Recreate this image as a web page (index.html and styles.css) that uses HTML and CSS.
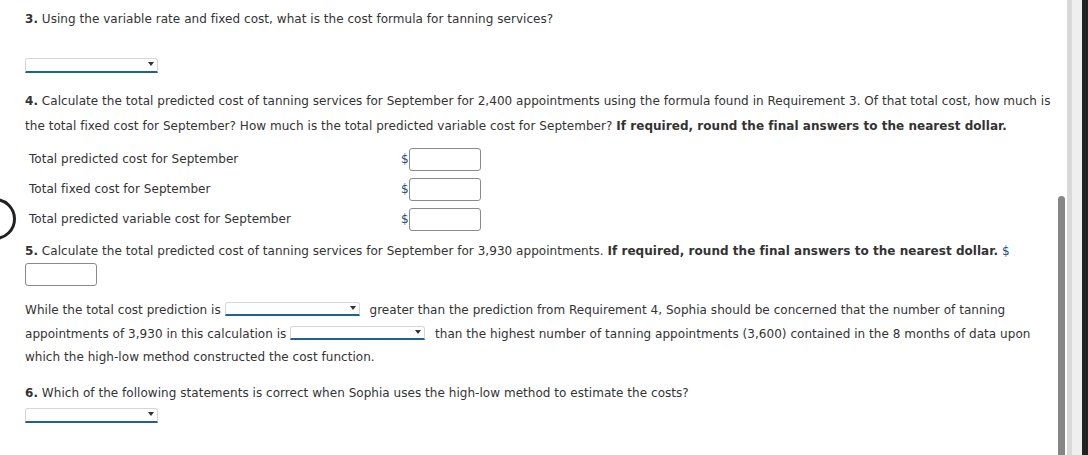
FILE: index.html
```html
<!DOCTYPE html>
<html lang="en">
<head>
  <meta charset="UTF-8">
  <title>Requirements 3-6</title>
  <link rel="stylesheet" href="styles.css">
</head>
<body>
  <div class="page">
    <div class="content">
      <p class="question"><b>3.</b> Using the variable rate and fixed cost, what is the cost formula for tanning services?</p>
      <div class="dropdown q3-select"></div>

      <p class="question q4"><b>4.</b> Calculate the total predicted cost of tanning services for September for 2,400 appointments using the formula found in Requirement 3. Of that total cost, how much is the total fixed cost for September? How much is the total predicted variable cost for September? <b>If required, round the final answers to the nearest dollar.</b></p>

      <div class="answer-rows">
        <div class="answer-row">
          <span class="answer-label">Total predicted cost for September</span>
          <span class="dollar">$</span>
          <span class="field"></span>
        </div>
        <div class="answer-row">
          <span class="answer-label">Total fixed cost for September</span>
          <span class="dollar">$</span>
          <span class="field"></span>
        </div>
        <div class="answer-row">
          <span class="answer-label">Total predicted variable cost for September</span>
          <span class="dollar">$</span>
          <span class="field"></span>
        </div>
      </div>

      <p class="question q5"><b>5.</b> Calculate the total predicted cost of tanning services for September for 3,930 appointments. <b>If required, round the final answers to the nearest dollar.</b> <span class="dollar">$</span></p>
      <div class="field q5-field"></div>

      <p class="sentence">While the total cost prediction is <span class="dropdown inline"></span> greater than the prediction from Requirement 4, Sophia should be concerned that the number of tanning appointments of 3,930 in this calculation is <span class="dropdown inline"></span> than the highest number of tanning appointments (3,600) contained in the 8 months of data upon which the high-low method constructed the cost function.</p>

      <p class="question q6"><b>6.</b> Which of the following statements is correct when Sophia uses the high-low method to estimate the costs?</p>
      <div class="dropdown q6-select"></div>
    </div>

    <div class="scroll-track"><div class="scroll-thumb"></div></div>
    <div class="side-edge"></div>
    <div class="side-panel"></div>
    <div class="side-dark"></div>
  </div>

  <!-- cursor ring peeking in from the left edge -->
  <div class="ring"></div>
</body>
</html>
```

FILE: styles.css
```css
* {
  margin: 0;
  padding: 0;
  box-sizing: border-box;
}

body {
  font-family: "DejaVu Sans", Verdana, sans-serif;
  font-size: 12px;
  letter-spacing: 0.04px;
  color: #333;
  background: #fff;
  overflow: hidden;
}

.page {
  display: flex;
  height: 455px;
}

.content {
  flex: 1;
  padding: 7px 2px 0 25px;
}

.question {
  line-height: 25px;
}

.question b {
  font-weight: bold;
}

.dropdown {
  position: relative;
  width: 133px;
  height: 15px;
  border: 1px solid #d6d6d6;
  border-bottom: 2px solid #1e6290;
  border-radius: 3px 3px 0 0;
  background: #fff;
}

.dropdown::after {
  content: "";
  position: absolute;
  right: 3px;
  top: 3px;
  border-left: 3.5px solid transparent;
  border-right: 3.5px solid transparent;
  border-top: 4px solid #333;
}

.q3-select {
  margin-top: 26px;
}

.q4 {
  margin-top: 16px;
}

.answer-rows {
  margin-top: 5px;
}

.answer-row {
  display: flex;
  align-items: center;
  height: 30px;
  padding-left: 4px;
}

.answer-label {
  width: 372px;
}

.dollar {
  color: #1c4f7a;
}

.field {
  display: block;
  width: 72px;
  height: 23px;
  border: 1px solid #8a8a8a;
  border-radius: 3px;
  background: #fff;
}

.q5 {
  margin-top: 6px;
  line-height: 23px;
}

.sentence {
  margin-top: 13px;
  line-height: 23.5px;
}

.dropdown.inline {
  display: inline-block;
  vertical-align: -2px;
  width: 135px;
  height: 14px;
  margin-right: 6px;
}

.q6 {
  margin-top: 11px;
}

.q6-select {
  margin-top: 2px;
}

.scroll-track {
  width: 9px;
  padding-top: 196px;
}

.scroll-thumb {
  width: 7px;
  height: 100%;
  background: #868686;
  border-radius: 4px 4px 0 0;
}

.side-edge {
  width: 5px;
  background: #d9d9d9;
}

.side-panel {
  width: 10px;
  background: #efefef;
}

.side-dark {
  width: 6px;
  background: #222;
}

.ring {
  position: absolute;
  left: -26px;
  top: 198px;
  width: 42px;
  height: 42px;
  border: 3px solid #222;
  border-radius: 50%;
}
```
